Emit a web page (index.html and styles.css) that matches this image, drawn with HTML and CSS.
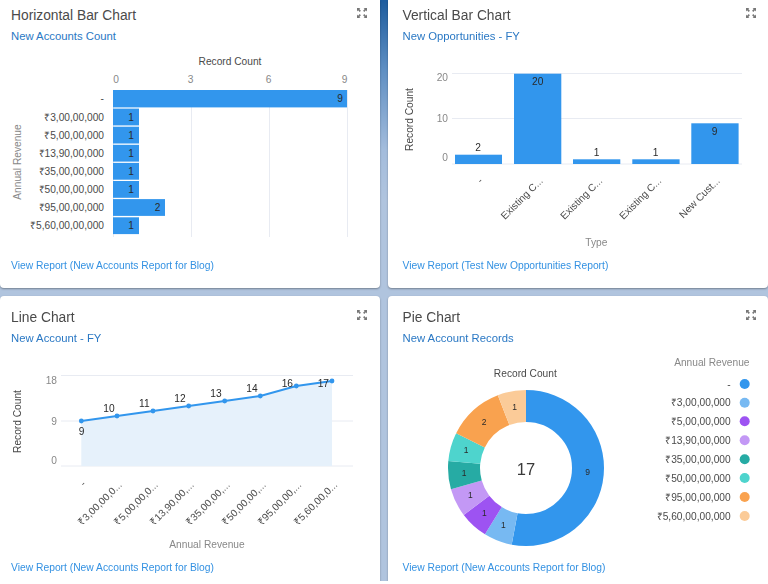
FILE: index.html
```html
<!DOCTYPE html>
<html lang="en">
  <head>
    <meta charset="UTF-8" />
    <title>Dashboard</title>
    <link rel="stylesheet" href="styles.css">
  </head>

  <body>
    <div class="page">

      <!-- horizontal bar -->
      <div class="card card-top card-left">
        <div class="head">
          <div>
            <h2>Horizontal Bar Chart</h2>
            <a class="sub" href="#">New Accounts Count</a>
          </div>
          <svg class="expand" viewBox="0 0 10 10"><path d="M0 0h3.4L2.3 1.1 3.9 2.7 2.7 3.9 1.1 2.3 0 3.4zM10 0v3.4L8.9 2.3 7.3 3.9 6.1 2.7 7.7 1.1 6.6 0zM0 10V6.6L1.1 7.7 2.7 6.1 3.9 7.3 2.3 8.9 3.4 10zM10 10H6.6L7.7 8.9 6.1 7.3 7.3 6.1 8.9 7.7 10 6.6z"/></svg>
        </div>
        <svg class="chart" viewBox="0 44 380 214">
          <text class="t-title mid" x="230" y="61">Record Count</text>
          <text class="t-tick mid" x="116" y="79.5">0</text>
          <text class="t-tick mid" x="190.5" y="79.5">3</text>
          <text class="t-tick mid" x="268.5" y="79.5">6</text>
          <text class="t-tick mid" x="344.5" y="79.5">9</text>
          <path class="grid" d="M113.5 90V237M191.5 90V237M269.5 90V237M347.5 90V237"/>
          <rect class="c1" x="113" y="90" width="234" height="17.4"/>
          <rect class="c1" x="113" y="108.6" width="26" height="16.8"/>
          <rect class="c1" x="113" y="126.7" width="26" height="16.8"/>
          <rect class="c1" x="113" y="144.8" width="26" height="16.8"/>
          <rect class="c1" x="113" y="162.9" width="26" height="16.8"/>
          <rect class="c1" x="113" y="181" width="26" height="16.8"/>
          <rect class="c1" x="113" y="199.1" width="52" height="16.8"/>
          <rect class="c1" x="113" y="217.3" width="26" height="16.8"/>
          <text class="t-val end" x="343" y="98.7">9</text>
          <text class="t-val end" x="134" y="117">1</text>
          <text class="t-val end" x="134" y="135">1</text>
          <text class="t-val end" x="134" y="153">1</text>
          <text class="t-val end" x="134" y="171.3">1</text>
          <text class="t-val end" x="134" y="189.4">1</text>
          <text class="t-val end" x="160.5" y="207.5">2</text>
          <text class="t-val end" x="134" y="225.7">1</text>
          <text class="t-label end" x="104" y="98.7">-</text>
          <text class="t-label end" x="104" y="117">₹3,00,00,000</text>
          <text class="t-label end" x="104" y="135">₹5,00,00,000</text>
          <text class="t-label end" x="104" y="153">₹13,90,00,000</text>
          <text class="t-label end" x="104" y="171.3">₹35,00,00,000</text>
          <text class="t-label end" x="104" y="189.4">₹50,00,00,000</text>
          <text class="t-label end" x="104" y="207.5">₹95,00,00,000</text>
          <text class="t-label end" x="104" y="225.7">₹5,60,00,00,000</text>
          <text class="t-axis mid" transform="translate(17 162) rotate(-90)">Annual Revenue</text>
        </svg>
        <a class="report" href="#">View Report (New Accounts Report for Blog)</a>
      </div>

      <!-- vertical bar -->
      <div class="card card-top card-right">
        <div class="head">
          <div>
            <h2>Vertical Bar Chart</h2>
            <a class="sub" href="#">New Opportunities - FY</a>
          </div>
          <svg class="expand" viewBox="0 0 10 10"><path d="M0 0h3.4L2.3 1.1 3.9 2.7 2.7 3.9 1.1 2.3 0 3.4zM10 0v3.4L8.9 2.3 7.3 3.9 6.1 2.7 7.7 1.1 6.6 0zM0 10V6.6L1.1 7.7 2.7 6.1 3.9 7.3 2.3 8.9 3.4 10zM10 10H6.6L7.7 8.9 6.1 7.3 7.3 6.1 8.9 7.7 10 6.6z"/></svg>
        </div>
        <svg class="chart" viewBox="388 44 380 214">
          <path class="grid" d="M452 73.5H742M452 118.5H742M452 164H742"/>
          <rect class="c1" x="455" y="154.7" width="47" height="9.3"/>
          <rect class="c1" x="514" y="73.7" width="47.3" height="90.3"/>
          <rect class="c1" x="573" y="159.3" width="47.3" height="4.7"/>
          <rect class="c1" x="632.3" y="159.3" width="47.3" height="4.7"/>
          <rect class="c1" x="691.3" y="123.3" width="47.3" height="40.7"/>
          <text class="t-val mid" x="478" y="147.3">2</text>
          <text class="t-val mid" x="537.7" y="81.3">20</text>
          <text class="t-val mid" x="596.7" y="152">1</text>
          <text class="t-val mid" x="655.7" y="152">1</text>
          <text class="t-val mid" x="714.7" y="131">9</text>
          <text class="t-tick end" x="448" y="77">20</text>
          <text class="t-tick end" x="448" y="118.5">10</text>
          <text class="t-tick end" x="448" y="157.7">0</text>
          <text class="t-title mid" transform="translate(409 119.5) rotate(-90)">Record Count</text>
          <text class="t-label end" transform="translate(481 179) rotate(-45)">-</text>
          <text class="t-label end" transform="translate(541 179) rotate(-45)">Existing C...</text>
          <text class="t-label end" transform="translate(600.5 179) rotate(-45)">Existing C...</text>
          <text class="t-label end" transform="translate(659.5 179) rotate(-45)">Existing C...</text>
          <text class="t-label end" transform="translate(718 179) rotate(-45)">New Cust...</text>
          <text class="t-axis mid" x="596.3" y="242">Type</text>
        </svg>
        <a class="report" href="#">View Report (Test New Opportunities Report)</a>
      </div>

      <!-- line -->
      <div class="card card-bottom card-left">
        <div class="head">
          <div>
            <h2>Line Chart</h2>
            <a class="sub" href="#">New Account - FY</a>
          </div>
          <svg class="expand" viewBox="0 0 10 10"><path d="M0 0h3.4L2.3 1.1 3.9 2.7 2.7 3.9 1.1 2.3 0 3.4zM10 0v3.4L8.9 2.3 7.3 3.9 6.1 2.7 7.7 1.1 6.6 0zM0 10V6.6L1.1 7.7 2.7 6.1 3.9 7.3 2.3 8.9 3.4 10zM10 10H6.6L7.7 8.9 6.1 7.3 7.3 6.1 8.9 7.7 10 6.6z"/></svg>
        </div>
        <svg class="chart" viewBox="0 346 380 214">
          <path class="grid" d="M61 375.5H353M61 421H353M61 466H353"/>
          <path class="area" d="M81.3 421 117 416 153 411 188.7 406 224.7 401 260.3 396 296.3 386 332 381V466H81.3z"/>
          <path class="line" d="M81.3 421 117 416 153 411 188.7 406 224.7 401 260.3 396 296.3 386 332 381"/>
          <circle class="c1" cx="81.3" cy="421" r="2.4"/>
          <circle class="c1" cx="117" cy="416" r="2.4"/>
          <circle class="c1" cx="153" cy="411" r="2.4"/>
          <circle class="c1" cx="188.7" cy="406" r="2.4"/>
          <circle class="c1" cx="224.7" cy="401" r="2.4"/>
          <circle class="c1" cx="260.3" cy="396" r="2.4"/>
          <circle class="c1" cx="296.3" cy="386" r="2.4"/>
          <circle class="c1" cx="332" cy="381" r="2.4"/>
          <text class="t-val mid" x="81.7" y="431">9</text>
          <text class="t-val mid" x="109" y="408.7">10</text>
          <text class="t-val mid" x="144.3" y="403.7">11</text>
          <text class="t-val mid" x="180" y="398">12</text>
          <text class="t-val mid" x="216" y="393">13</text>
          <text class="t-val mid" x="252" y="388">14</text>
          <text class="t-val mid" x="287.3" y="383.7">16</text>
          <text class="t-val mid" x="323.3" y="383.7">17</text>
          <text class="t-tick end" x="57" y="380">18</text>
          <text class="t-tick end" x="57" y="421">9</text>
          <text class="t-tick end" x="57" y="460">0</text>
          <text class="t-title mid" transform="translate(17.5 421.5) rotate(-90)">Record Count</text>
          <text class="t-label end" transform="translate(84 482) rotate(-45)">-</text>
          <text class="t-label end" transform="translate(120 483) rotate(-45)">₹3,00,00,0...</text>
          <text class="t-label end" transform="translate(156 483) rotate(-45)">₹5,00,00,0...</text>
          <text class="t-label end" transform="translate(192 483) rotate(-45)">₹13,90,00,...</text>
          <text class="t-label end" transform="translate(228 483) rotate(-45)">₹35,00,00,...</text>
          <text class="t-label end" transform="translate(264 483) rotate(-45)">₹50,00,00,...</text>
          <text class="t-label end" transform="translate(299.5 483) rotate(-45)">₹95,00,00,...</text>
          <text class="t-label end" transform="translate(335.5 483) rotate(-45)">₹5,60,00,0...</text>
          <text class="t-axis mid" x="207" y="544.3">Annual Revenue</text>
        </svg>
        <a class="report" href="#">View Report (New Accounts Report for Blog)</a>
      </div>

      <!-- pie -->
      <div class="card card-bottom card-right">
        <div class="head">
          <div>
            <h2>Pie Chart</h2>
            <a class="sub" href="#">New Account Records</a>
          </div>
          <svg class="expand" viewBox="0 0 10 10"><path d="M0 0h3.4L2.3 1.1 3.9 2.7 2.7 3.9 1.1 2.3 0 3.4zM10 0v3.4L8.9 2.3 7.3 3.9 6.1 2.7 7.7 1.1 6.6 0zM0 10V6.6L1.1 7.7 2.7 6.1 3.9 7.3 2.3 8.9 3.4 10zM10 10H6.6L7.7 8.9 6.1 7.3 7.3 6.1 8.9 7.7 10 6.6z"/></svg>
        </div>
        <svg class="chart" viewBox="388 346 380 214">
          <text class="t-title mid" x="525.3" y="373">Record Count</text>
          <g transform="rotate(-90 526 468)">
            <circle class="slice s1" cx="526" cy="468" r="62" pathLength="17" stroke-dasharray="9 8" stroke-dashoffset="0"/>
            <circle class="slice s2" cx="526" cy="468" r="62" pathLength="17" stroke-dasharray="1 16" stroke-dashoffset="-9"/>
            <circle class="slice s3" cx="526" cy="468" r="62" pathLength="17" stroke-dasharray="1 16" stroke-dashoffset="-10"/>
            <circle class="slice s4" cx="526" cy="468" r="62" pathLength="17" stroke-dasharray="1 16" stroke-dashoffset="-11"/>
            <circle class="slice s5" cx="526" cy="468" r="62" pathLength="17" stroke-dasharray="1 16" stroke-dashoffset="-12"/>
            <circle class="slice s6" cx="526" cy="468" r="62" pathLength="17" stroke-dasharray="1 16" stroke-dashoffset="-13"/>
            <circle class="slice s7" cx="526" cy="468" r="62" pathLength="17" stroke-dasharray="2 15" stroke-dashoffset="-14"/>
            <circle class="slice s8" cx="526" cy="468" r="62" pathLength="17" stroke-dasharray="1 16" stroke-dashoffset="-16"/>
          </g>
          <text class="t-slice mid" x="587.7" y="472.3">9</text>
          <text class="t-slice mid" x="503.3" y="525">1</text>
          <text class="t-slice mid" x="484.3" y="513">1</text>
          <text class="t-slice mid" x="470.3" y="495.3">1</text>
          <text class="t-slice mid" x="464" y="472.7">1</text>
          <text class="t-slice mid" x="466" y="450">1</text>
          <text class="t-slice mid" x="484" y="421.7">2</text>
          <text class="t-slice mid" x="514.7" y="406.7">1</text>
          <text class="t-total mid" x="526" y="469">17</text>
          <text class="t-axis end" x="749.5" y="362">Annual Revenue</text>
          <text class="t-label end" x="730.7" y="384">-</text>
          <text class="t-label end" x="730.7" y="402.7">₹3,00,00,000</text>
          <text class="t-label end" x="730.7" y="421.3">₹5,00,00,000</text>
          <text class="t-label end" x="730.7" y="440.3">₹13,90,00,000</text>
          <text class="t-label end" x="730.7" y="459.3">₹35,00,00,000</text>
          <text class="t-label end" x="730.7" y="478">₹50,00,00,000</text>
          <text class="t-label end" x="730.7" y="497">₹95,00,00,000</text>
          <text class="t-label end" x="730.7" y="516">₹5,60,00,00,000</text>
          <circle class="dot d1" cx="744.7" cy="384" r="5"/>
          <circle class="dot d2" cx="744.7" cy="402.7" r="5"/>
          <circle class="dot d3" cx="744.7" cy="421.3" r="5"/>
          <circle class="dot d4" cx="744.7" cy="440.3" r="5"/>
          <circle class="dot d5" cx="744.7" cy="459.3" r="5"/>
          <circle class="dot d6" cx="744.7" cy="478" r="5"/>
          <circle class="dot d7" cx="744.7" cy="497" r="5"/>
          <circle class="dot d8" cx="744.7" cy="516" r="5"/>
        </svg>
        <a class="report" href="#">View Report (New Accounts Report for Blog)</a>
      </div>

    </div>
  </body>
</html>
```

FILE: styles.css
```css
* {
  margin: 0;
  padding: 0;
  box-sizing: border-box;
}

body {
  background: #fff;
  font-family: "Liberation Sans", Arial, sans-serif;
  overflow: hidden;
}

.page {
  display: grid;
  grid-template-columns: 380px 380px;
  grid-template-rows: 288px 285px;
  column-gap: 8px;
  row-gap: 8px;
  height: 581px;
  background: linear-gradient(to bottom, #1d5c9e 0, #5f8fc3 70px, #a3bcdc 150px, #b0c4de 200px);
  filter: blur(0.4px);
}

.card {
  display: flex;
  flex-direction: column;
  background: #fff;
  box-shadow: 0 1px 2px rgba(0, 0, 0, 0.35);
}

.card-top {
  padding-top: 7px;
  padding-bottom: 13px;
  border-radius: 0 0 4px 4px;
}

.card-bottom {
  padding-top: 13px;
  padding-bottom: 4px;
  border-radius: 4px 4px 0 0;
}

.card-left {
  padding-left: 11px;
  padding-right: 13px;
}

.card-right {
  padding-left: 14.5px;
  padding-right: 12px;
}

.head {
  display: flex;
  justify-content: space-between;
  align-items: flex-start;
}

h2 {
  font-size: 13.8px;
  font-weight: normal;
  line-height: 18px;
  color: #4a4a4a;
}

a {
  text-decoration: none;
}

.sub {
  display: block;
  margin-top: 3px;
  font-size: 11.3px;
  line-height: 16px;
  color: #2a78c4;
}

.report {
  font-size: 10.3px;
  line-height: 16px;
  color: #3391e2;
}

.expand {
  width: 10px;
  height: 10px;
  margin-top: 1px;
  fill: #777;
}

.chart {
  display: block;
  flex: none;
  width: 380px;
  height: 214px;
}

.card-left .chart {
  margin-left: -11px;
}

.card-right .chart {
  margin-left: -14.5px;
}

.chart text {
  font-size: 10.2px;
  dominant-baseline: central;
}

.mid {
  text-anchor: middle;
}

.end {
  text-anchor: end;
}

.t-title,
.t-label {
  fill: #4a4a4a;
}

.t-tick,
.t-axis {
  fill: #888;
}

.t-val {
  fill: #2a2a2a;
}

.chart .t-slice {
  font-size: 8.5px;
  fill: #2a2a2a;
}

.chart .t-total {
  font-size: 16.5px;
  fill: #3a3a3a;
}

.grid {
  fill: none;
  stroke: #e8ebf2;
  stroke-width: 1;
}

.area {
  fill: #e6f1fb;
}

.line {
  fill: none;
  stroke: #3296ed;
  stroke-width: 2;
}

.c1 {
  fill: #3296ed;
}

.slice {
  fill: none;
  stroke-width: 32;
}

.s1 { stroke: #3296ed; }
.s2 { stroke: #77b9f2; }
.s3 { stroke: #9d53f2; }
.s4 { stroke: #c398f5; }
.s5 { stroke: #26aba4; }
.s6 { stroke: #4ed4cd; }
.s7 { stroke: #f9a24f; }
.s8 { stroke: #fbcb98; }

.d1 { fill: #3296ed; }
.d2 { fill: #77b9f2; }
.d3 { fill: #9d53f2; }
.d4 { fill: #c398f5; }
.d5 { fill: #26aba4; }
.d6 { fill: #4ed4cd; }
.d7 { fill: #f9a24f; }
.d8 { fill: #fbcb98; }
```
